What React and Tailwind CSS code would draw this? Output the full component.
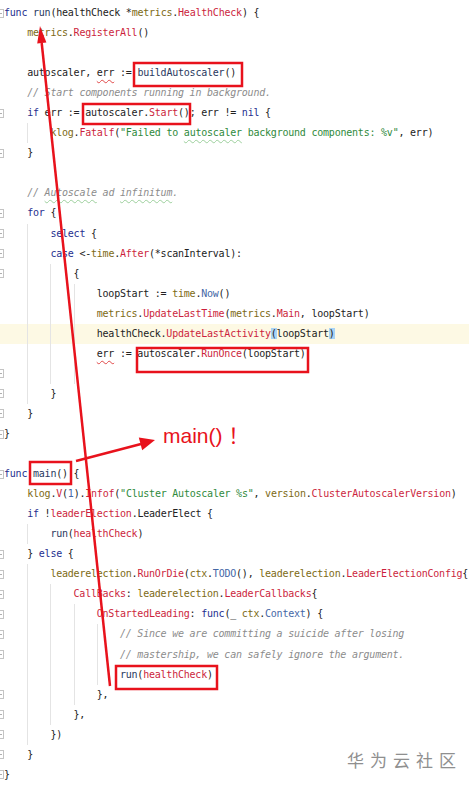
import React from "react";

const K = "text-[#1f2f8f]";
const F = "text-[#cc1f3d]";
const P = "text-[#7d6a14]";
const B = "text-[#4567a6]";
const S = "text-[#2f8a3c]";
const CM = "text-[#8c8c8c] italic";
const D = "text-[#222222]";
const N = "text-[#28385e]";
const WR = "underline decoration-wavy decoration-[#e04848] decoration-1 underline-offset-[3px]";
const WG = "underline decoration-wavy decoration-[#9ccf9c] decoration-1 underline-offset-[3px]";
const HB = "bg-[#a9d3f5]";

// [indent, guides, fold, tokens, highlight]
const lines = [
  [0, 0, true, [["func", K], [" ", D], ["run", N], ["(healthCheck *", D], ["metrics", P], [".", D], ["HealthCheck", F], [") {", D]]],
  [1, 0, false, [["metrics", P], [".", D], ["RegisterAll", F], ["()", D]]],
  [0, 0, false, []],
  [1, 0, false, [["autoscaler, ", D], ["err", D + " " + WR], [" := ", D], ["buildAutoscaler", N], ["()", D]]],
  [1, 0, false, [["// Start components running in background.", CM]]],
  [1, 0, true, [["if", K], [" err := autoscaler.", D], ["Start", F], ["(); err != ", D], ["nil", K], [" {", D]]],
  [2, 1, false, [["klog", P], [".", D], ["Fatalf", F], ["(", D], ["\"Failed to ", S], ["autoscaler", S + " " + WG], [" background components: %v\"", S], [", err)", D]]],
  [1, 0, true, [["}", D]]],
  [0, 0, false, []],
  [1, 0, false, [["// ", CM], ["Autoscale", CM + " " + WG], [" ad ", CM], ["infinitum", CM + " " + WG], [".", CM]]],
  [1, 0, true, [["for", K], [" {", D]]],
  [2, 1, true, [["select", K], [" {", D]]],
  [2, 1, true, [["case", K], [" <-", D], ["time", P], [".", D], ["After", F], ["(*scanInterval):", D]]],
  [3, 2, true, [["{", D]]],
  [4, 3, false, [["loopStart := ", D], ["time", P], [".", D], ["Now", B], ["()", D]]],
  [4, 3, false, [["metrics", P], [".", D], ["UpdateLastTime", F], ["(", D], ["metrics", P], [".", D], ["Main", F], [", loopStart)", D]]],
  [4, 3, false, [["healthCheck.", D], ["UpdateLastActivity", F], ["(", D + " " + HB], ["loopStart", D], [")", D + " " + HB]], true],
  [4, 3, false, [["err", D + " " + WR], [" := autoscaler.", D], ["RunOnce", F], ["(loopStart)", D]]],
  [4, 3, true, []],
  [2, 1, true, [["}", D]]],
  [1, 0, true, [["}", D]]],
  [0, 0, true, [["}", D]]],
  [0, 0, false, []],
  [0, 0, true, [["func", K], [" ", D], ["main", N], ["() {", D]]],
  [1, 0, false, [["klog", P], [".", D], ["V", F], ["(", D], ["1", B], [").", D], ["Infof", F], ["(", D], ["\"Cluster Autoscaler %s\"", S], [", ", D], ["version", P], [".", D], ["ClusterAutoscalerVersion", F], [")", D]]],
  [1, 0, false, [["if", K], [" !", D], ["leaderElection", F], [".LeaderElect {", D]]],
  [2, 1, false, [["run", N], ["(", D], ["healthCheck", F], [")", D]]],
  [1, 0, true, [["} ", D], ["else", K], [" {", D]]],
  [2, 1, true, [["leaderelection", P], [".", D], ["RunOrDie", F], ["(", D], ["ctx", P], [".", D], ["TODO", B], ["(), ", D], ["leaderelection", P], [".", D], ["LeaderElectionConfig", F], ["{", D]]],
  [3, 2, true, [["CallBacks", F], [": ", D], ["leaderelection", P], [".", D], ["LeaderCallbacks", F], ["{", D]]],
  [4, 3, true, [["OnStartedLeading", F], [": ", D], ["func", K], ["(_ ", D], ["ctx", P], [".", D], ["Context", B], [") {", D]]],
  [5, 4, true, [["// Since we are committing a suicide after losing", CM]]],
  [5, 4, true, [["// mastership, we can safely ignore the argument.", CM]]],
  [5, 4, false, [["run", N], ["(", D], ["healthCheck", F], [")", D]]],
  [4, 3, true, [["},", D]]],
  [3, 2, true, [["},", D]]],
  [2, 1, true, [["})", D]]],
  [1, 0, true, [["}", D]]],
  [0, 0, true, [["}", D]]],
];

function Fold({ show }) {
  return (
    <div className="w-[4px] shrink-0 overflow-hidden flex items-center h-full">
      {show && (
        <div className="shrink-0 -ml-[5px] w-[9px] h-[9px] border border-[#c4c4c4] bg-white flex items-center justify-center">
          <div className="w-[5px] h-px bg-[#b0b0b0]" />
        </div>
      )}
    </div>
  );
}

function Line({ indent, guides, fold, tokens, hl }) {
  const pads = [];
  for (let i = 0; i < indent; i++) {
    pads.push(
      <div
        key={i}
        className={
          i >= 1 && i <= guides
            ? "w-[23.2px] h-full shrink-0 border-l border-[#e4e4e4]"
            : "w-[23.2px] h-full shrink-0"
        }
      />
    );
  }
  return (
    <div className={hl ? "flex items-center h-[20.05px] bg-[#fdf9e4]" : "flex items-center h-[20.05px]"}>
      <Fold show={fold} />
      {pads}
      <div className="whitespace-pre leading-[14px]">
        {tokens.map(([t, c], i) => (
          <span key={i} className={c}>
            {t}
          </span>
        ))}
      </div>
    </div>
  );
}

export default function App() {
  const red = "#e8121c";
  return (
    <div className="relative w-[469px] h-[786px] overflow-hidden bg-white">
      <div className="pt-[3px] font-['DejaVu_Sans_Mono',monospace] text-[10px] tracking-[-0.22px]">
        {lines.map((l, i) => (
          <Line key={i} indent={l[0]} guides={l[1]} fold={l[2]} tokens={l[3]} hl={l[4]} />
        ))}
      </div>

      <svg className="absolute inset-0 pointer-events-none" width="469" height="786" viewBox="0 0 469 786">
        <g fill="none" stroke={red} strokeWidth="2.5">
          <rect x="134" y="63" width="108" height="23" />
          <rect x="83" y="104" width="107" height="20" />
          <rect x="137" y="348" width="171" height="24" />
          <rect x="30" y="462" width="41" height="22" />
          <rect x="116" y="666" width="101" height="23" />
          <line x1="110" y1="686" x2="41.7" y2="43" />
          <line x1="76" y1="461" x2="141" y2="444" />
        </g>
        <g fill={red}>
          <polygon points="40,26 46.4,42.4 37.2,43.6" />
          <polygon points="155,440 142.2,450.2 138.8,437.6" />
        </g>
      </svg>

      <div className="absolute left-[163px] top-[425px] whitespace-pre leading-none text-[21px] text-[#e8121c] font-['Liberation_Sans','Noto_Sans_CJK_SC',sans-serif]">
        main() ！
      </div>

      <div className="absolute left-[347px] top-[751px] leading-none text-[17px] tracking-[6px] text-[#8f8f8f] font-['Noto_Sans_CJK_SC',sans-serif]">
        华为云社区
      </div>
    </div>
  );
}
